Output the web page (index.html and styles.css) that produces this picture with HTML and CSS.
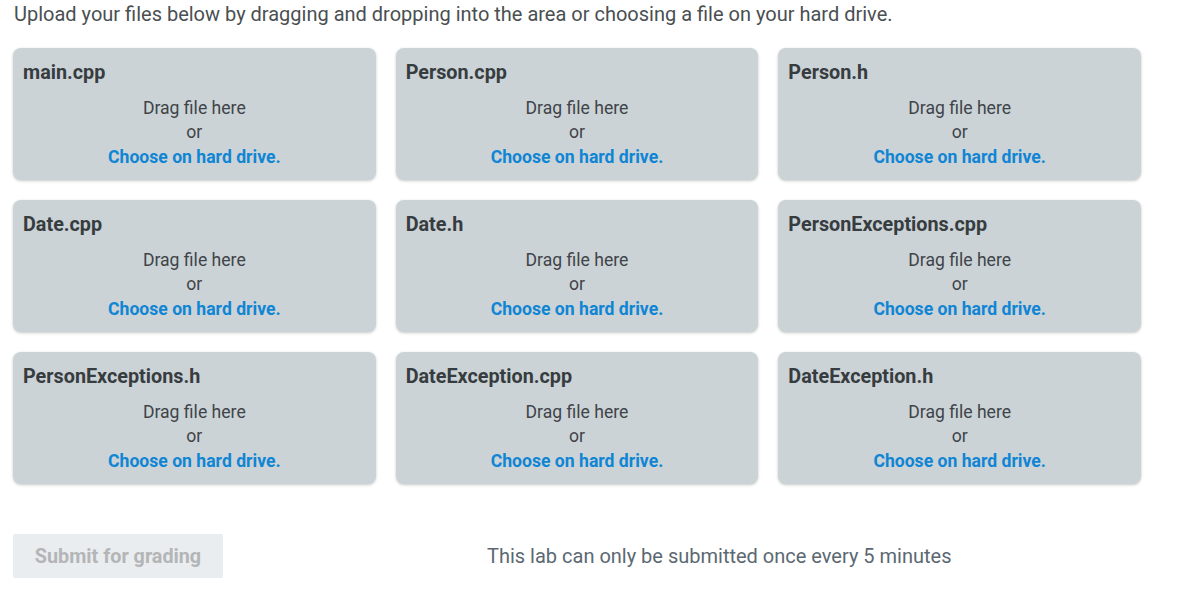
FILE: index.html
```html
<!DOCTYPE html>
<html>
<head>
<meta charset="utf-8">
<link rel="stylesheet" href="styles.css">
</head>
<body>
<div class="page">
  <p class="intro">Upload your files below by dragging and dropping into the area or choosing a file on your hard drive.</p>
  <div class="grid">
    <div class="card"><div class="name">main.cpp</div><div class="drop"><div>Drag file here</div><div>or</div><div class="choose">Choose on hard drive.</div></div></div>
    <div class="card"><div class="name">Person.cpp</div><div class="drop"><div>Drag file here</div><div>or</div><div class="choose">Choose on hard drive.</div></div></div>
    <div class="card"><div class="name">Person.h</div><div class="drop"><div>Drag file here</div><div>or</div><div class="choose">Choose on hard drive.</div></div></div>
    <div class="card"><div class="name">Date.cpp</div><div class="drop"><div>Drag file here</div><div>or</div><div class="choose">Choose on hard drive.</div></div></div>
    <div class="card"><div class="name">Date.h</div><div class="drop"><div>Drag file here</div><div>or</div><div class="choose">Choose on hard drive.</div></div></div>
    <div class="card"><div class="name">PersonExceptions.cpp</div><div class="drop"><div>Drag file here</div><div>or</div><div class="choose">Choose on hard drive.</div></div></div>
    <div class="card"><div class="name">PersonExceptions.h</div><div class="drop"><div>Drag file here</div><div>or</div><div class="choose">Choose on hard drive.</div></div></div>
    <div class="card"><div class="name">DateException.cpp</div><div class="drop"><div>Drag file here</div><div>or</div><div class="choose">Choose on hard drive.</div></div></div>
    <div class="card"><div class="name">DateException.h</div><div class="drop"><div>Drag file here</div><div>or</div><div class="choose">Choose on hard drive.</div></div></div>
  </div>
  <div class="footer">
    <button class="submit" disabled>Submit for grading</button>
    <span class="note">This lab can only be submitted once every 5 minutes</span>
  </div>
</div>
</body>
</html>
```
FILE: styles.css
```css
html, body {
  margin: 0;
  padding: 0;
  background: #ffffff;
}
body {
  font-family: Roboto, "Liberation Sans", sans-serif;
  color: #3b3f42;
}
.page {
  padding: 0 13px;
}
.intro {
  margin: 0;
  padding: 2px 0 0 1px;
  font-size: 20px;
  line-height: 24px;
  color: #4a4f52;
}
.grid {
  margin-top: 22px;
  width: 1128px;
  display: grid;
  grid-template-columns: repeat(3, 1fr);
  column-gap: 20px;
  row-gap: 20px;
}
.card {
  background: #cbd3d7;
  border-radius: 8px;
  height: 132px;
  box-sizing: border-box;
  padding: 13px 10px 0 10px;
  box-shadow: 0 1px 3px rgba(0, 0, 0, 0.22);
}
.name {
  font-size: 19.8px;
  font-weight: 700;
  line-height: 24px;
  color: #373c3f;
}
.drop {
  margin-top: 11px;
  text-align: center;
  font-size: 17.6px;
  line-height: 24.4px;
  color: #3f4448;
}
.choose {
  font-weight: 700;
  color: #0f85d4;
  cursor: pointer;
}
.footer {
  margin-top: 50px;
  display: flex;
  align-items: center;
}
.submit {
  width: 210px;
  height: 44px;
  border: none;
  border-radius: 2px;
  background: #eaedf0;
  color: #b3b5b7;
  font-family: Roboto, "Liberation Sans", sans-serif;
  font-size: 19.8px;
  font-weight: 700;
  padding: 0;
}
.note {
  margin-left: 264px;
  font-size: 20px;
  color: #5b6872;
}
```
